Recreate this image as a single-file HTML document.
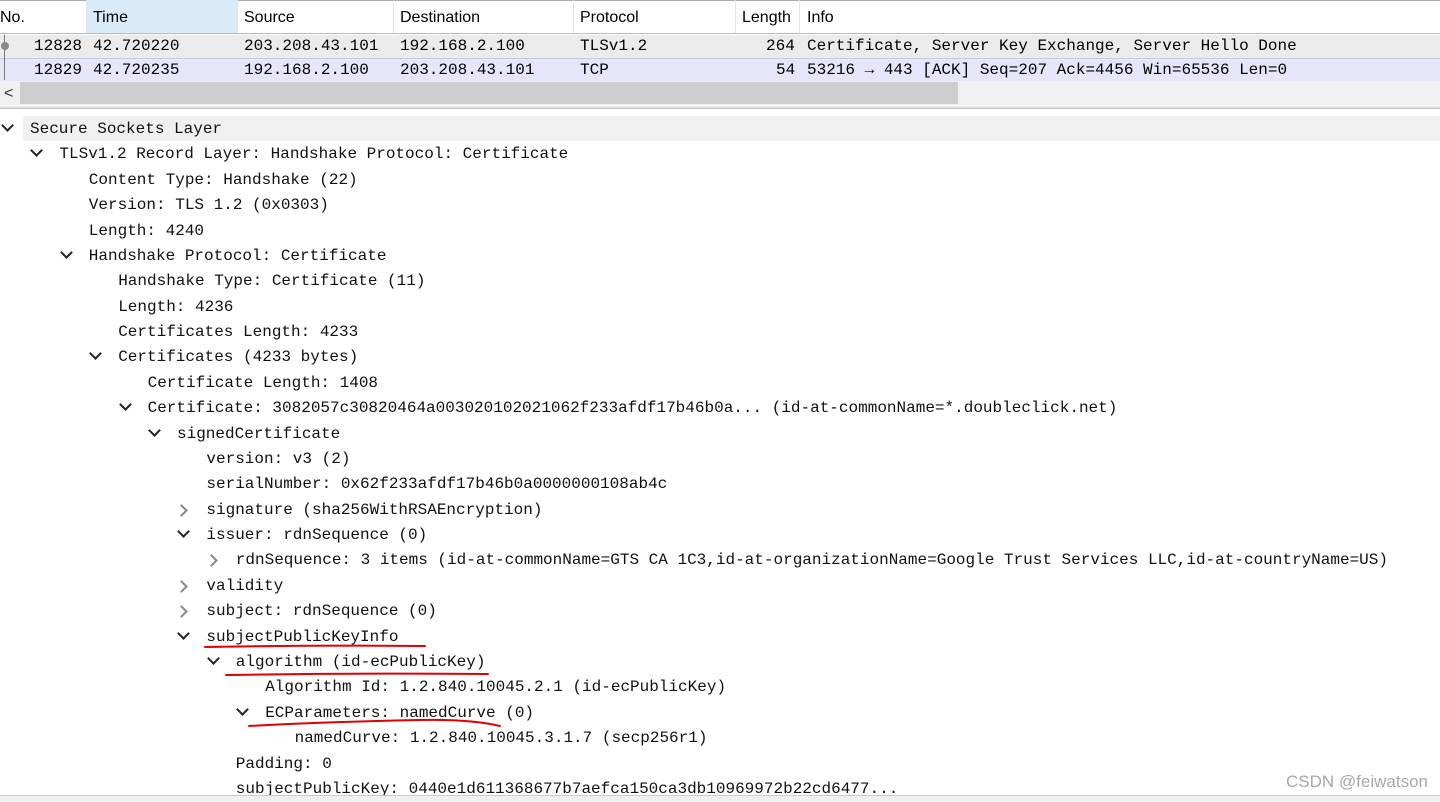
<!DOCTYPE html>
<html><head><meta charset="utf-8"><style>
*{margin:0;padding:0;box-sizing:border-box}
body{width:1440px;height:802px;overflow:hidden;background:#fff;position:relative;font-family:"Liberation Mono",monospace;font-size:16px;color:#000}
.h{position:absolute;top:0;height:34px;line-height:35px;font-family:"Liberation Sans",sans-serif;font-size:16px;border-right:1px solid #e4e4e4;padding-left:0}
.pr{position:absolute;left:0;width:1440px;height:23px;line-height:23px;white-space:pre}
.pr span{position:absolute}
.r{position:absolute;height:25px;line-height:25px;white-space:pre;color:#111}
.a{position:absolute;width:9px;height:9px;border-right:2.5px solid #222;border-bottom:2.5px solid #222}
.dn{transform:rotate(45deg)}
.rt{transform:rotate(-45deg);border-color:#888}
</style></head><body>
<div style="position:absolute;top:0;left:0;width:1440px;height:1px;background:#aaa"></div>
<div class="h" style="left:0;width:87px">No.</div>
<div class="h" style="left:87px;width:151px;background:#d9ebf9;padding-left:6px">Time</div>
<div class="h" style="left:238px;width:156px;padding-left:6px">Source</div>
<div class="h" style="left:394px;width:180px;padding-left:6px">Destination</div>
<div class="h" style="left:574px;width:162px;padding-left:6px">Protocol</div>
<div class="h" style="left:736px;width:64px;padding-left:6px">Length</div>
<div class="h" style="left:800px;width:640px;padding-left:7px;border:none">Info</div>
<div style="position:absolute;top:33px;left:0;width:1440px;height:1px;background:#bbb"></div>
<div class="pr" style="top:35px;background:#ebebeb"><span style="left:34px">12828</span><span style="left:93px">42.720220</span><span style="left:244px">203.208.43.101</span><span style="left:400px">192.168.2.100</span><span style="left:580px">TLSv1.2</span><span style="left:766px">264</span><span style="left:807px">Certificate, Server Key Exchange, Server Hello Done</span></div>
<div class="pr" style="top:58px;background:#e6e6fb;border-top:1px solid #c8c8e8"><span style="left:34px">12829</span><span style="left:93px">42.720235</span><span style="left:244px">192.168.2.100</span><span style="left:400px">203.208.43.101</span><span style="left:580px">TCP</span><span style="left:776px">54</span><span style="left:807px">53216 → 443 [ACK] Seq=207 Ack=4456 Win=65536 Len=0</span></div>
<div style="position:absolute;left:4px;top:35px;width:1px;height:45px;background:#777"></div>
<div style="position:absolute;left:1px;top:42px;width:8px;height:8px;border-radius:50%;background:#888"></div>
<div style="position:absolute;top:81px;left:0;width:1440px;height:24px;background:#f0f0f0"></div>
<div style="position:absolute;top:82px;left:20px;width:938px;height:22px;background:#cdcdcd"></div>
<div style="position:absolute;top:87px;left:4px;font-family:'Liberation Sans',sans-serif;font-size:16px;line-height:14px;color:#333">&lt;</div>
<div style="position:absolute;top:106px;left:0;width:1440px;height:3px;background:#e8e8e8;border-bottom:1px solid #bbb"></div>
<div style="position:absolute;top:116px;left:23px;width:1417px;height:25px;background:#f0f0f0"></div>
<div id="tree"></div>
<div style="position:absolute;top:795px;left:0;width:1440px;height:7px;background:#f0f0f0;border-top:1px solid #ccc"></div>
<div style="position:absolute;right:12px;top:772px;font-family:'Liberation Sans',sans-serif;font-size:17px;color:#a8a8a8">CSDN @feiwatson</div>
<svg style="position:absolute;left:0;top:0" width="1440" height="802"><g fill="none" stroke="#e00000" stroke-width="2" stroke-linecap="round"><path d="M205 647 Q320 645 425 646"/><path d="M226 675 Q360 673 488 674"/><path d="M249 726 Q320 722 420 720 Q470 719 500 726"/></g></svg>
<script>
var rows=[[0,'d','Secure Sockets Layer'],[1,'d','TLSv1.2 Record Layer: Handshake Protocol: Certificate'],[2,'','Content Type: Handshake (22)'],[2,'','Version: TLS 1.2 (0x0303)'],[2,'','Length: 4240'],[2,'d','Handshake Protocol: Certificate'],[3,'','Handshake Type: Certificate (11)'],[3,'','Length: 4236'],[3,'','Certificates Length: 4233'],[3,'d','Certificates (4233 bytes)'],[4,'','Certificate Length: 1408'],[4,'d','Certificate: 3082057c30820464a003020102021062f233afdf17b46b0a... (id-at-commonName=*.doubleclick.net)'],[5,'d','signedCertificate'],[6,'','version: v3 (2)'],[6,'','serialNumber: 0x62f233afdf17b46b0a0000000108ab4c'],[6,'r','signature (sha256WithRSAEncryption)'],[6,'d','issuer: rdnSequence (0)'],[7,'r','rdnSequence: 3 items (id-at-commonName=GTS CA 1C3,id-at-organizationName=Google Trust Services LLC,id-at-countryName=US)'],[6,'r','validity'],[6,'r','subject: rdnSequence (0)'],[6,'d','subjectPublicKeyInfo'],[7,'d','algorithm (id-ecPublicKey)'],[8,'','Algorithm Id: 1.2.840.10045.2.1 (id-ecPublicKey)'],[8,'d','ECParameters: namedCurve (0)'],[9,'','namedCurve: 1.2.840.10045.3.1.7 (secp256r1)'],[7,'','Padding: 0'],[7,'','subjectPublicKey: 0440e1d611368677b7aefca150ca3db10969972b22cd6477...']];
var h='';rows.forEach(function(r,i){var x=30+r[0]*29.4,y=117+i*25.38;h+='<div class="r" style="left:'+x+'px;top:'+y+'px">'+r[2].replace(/&/g,'&amp;').replace(/</g,'&lt;')+'</div>';if(r[1]=='d')h+='<div class="a dn" style="left:'+(x-27)+'px;top:'+(y+4)+'px"></div>';if(r[1]=='r')h+='<div class="a rt" style="left:'+(x-29)+'px;top:'+(y+8)+'px"></div>';});
document.getElementById('tree').innerHTML=h;
</script>
</body></html>
